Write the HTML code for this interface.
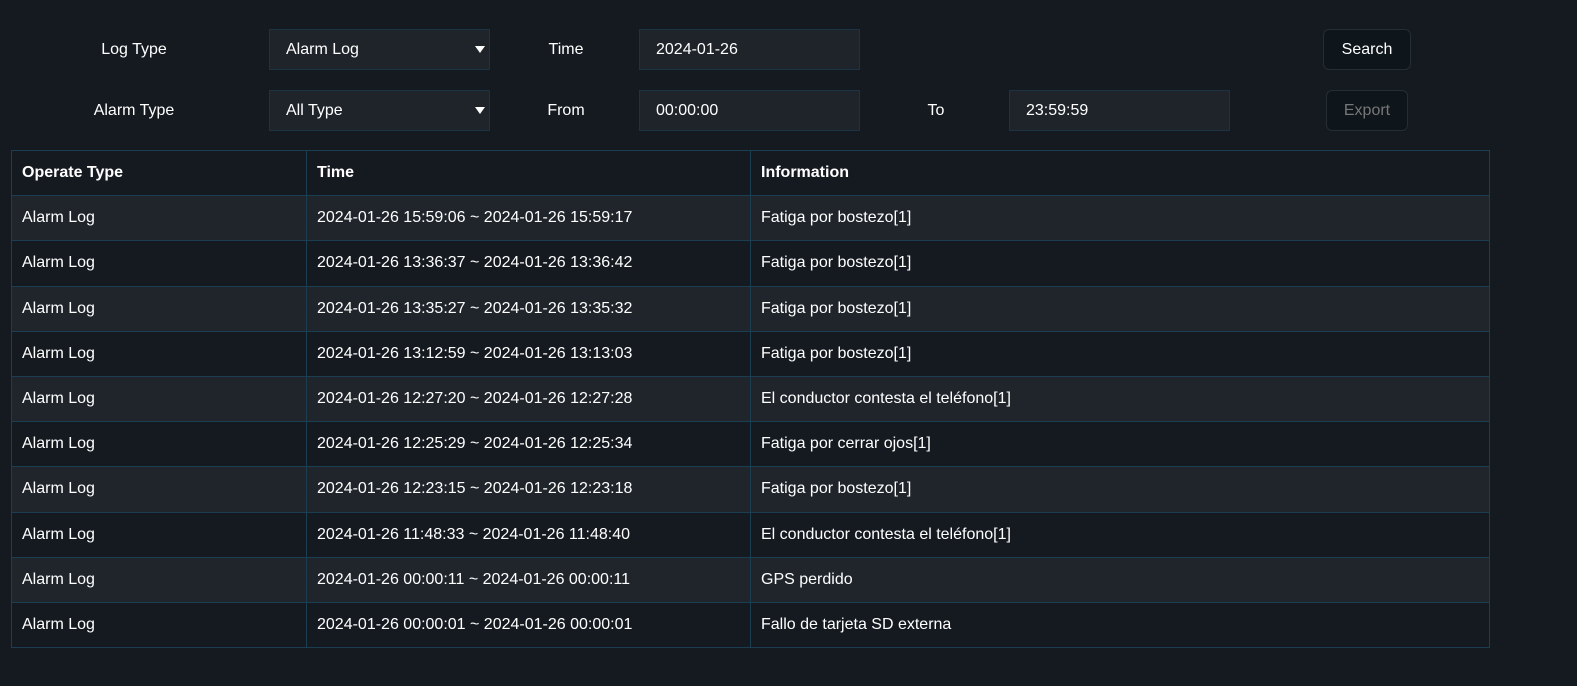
<!DOCTYPE html>
<html><head><meta charset="utf-8"><style>
*{box-sizing:border-box;margin:0;padding:0}
body{width:1577px;height:686px;background:#151a20;font-family:"Liberation Sans",Arial,sans-serif;font-size:16px;color:#fff;position:relative;overflow:hidden}
.lbl{position:absolute;text-align:center;line-height:41px;height:41px}
.inp{position:absolute;height:41px;width:221px;background:#1e242a;border:1px solid #1b3444;padding-left:16px;line-height:39px}
.arr{position:absolute;right:4px;top:16px;width:0;height:0;border-left:5px solid transparent;border-right:5px solid transparent;border-top:7px solid #fff}
.btn{position:absolute;height:41px;background:#0e151b;border:1px solid #252d35;border-radius:6px;text-align:center;line-height:39px}
table{position:absolute;left:11px;top:150px;width:1479px;border-collapse:collapse}
td,th{border:1px solid #1b3e52;height:45.2px;padding:0 10px;text-align:left;font-weight:normal}
th{font-weight:bold}
tr:nth-child(even) td{background:#1f252b}
tr:nth-child(odd) td{background:#151a20}
</style></head><body>
<div class="lbl" style="left:34px;width:200px;top:29px">Log Type</div>
<div class="lbl" style="left:34px;width:200px;top:90px">Alarm Type</div>
<div class="inp" style="left:269px;top:29px">Alarm Log<span class="arr"></span></div>
<div class="inp" style="left:269px;top:90px">All Type<span class="arr"></span></div>
<div class="lbl" style="left:516px;width:100px;top:29px">Time</div>
<div class="lbl" style="left:516px;width:100px;top:90px">From</div>
<div class="inp" style="left:639px;top:29px">2024-01-26</div>
<div class="inp" style="left:639px;top:90px">00:00:00</div>
<div class="lbl" style="left:886px;width:100px;top:90px">To</div>
<div class="inp" style="left:1009px;top:90px">23:59:59</div>
<div class="btn" style="left:1323px;top:29px;width:88px">Search</div>
<div class="btn" style="left:1326px;top:90px;width:82px;color:#777">Export</div>
<table>
<colgroup><col style="width:295px"><col style="width:444px"><col></colgroup>
<tr><th>Operate Type</th><th>Time</th><th>Information</th></tr>
<tr><td>Alarm Log</td><td>2024-01-26 15:59:06 ~ 2024-01-26 15:59:17</td><td>Fatiga por bostezo[1]</td></tr>
<tr><td>Alarm Log</td><td>2024-01-26 13:36:37 ~ 2024-01-26 13:36:42</td><td>Fatiga por bostezo[1]</td></tr>
<tr><td>Alarm Log</td><td>2024-01-26 13:35:27 ~ 2024-01-26 13:35:32</td><td>Fatiga por bostezo[1]</td></tr>
<tr><td>Alarm Log</td><td>2024-01-26 13:12:59 ~ 2024-01-26 13:13:03</td><td>Fatiga por bostezo[1]</td></tr>
<tr><td>Alarm Log</td><td>2024-01-26 12:27:20 ~ 2024-01-26 12:27:28</td><td>El conductor contesta el teléfono[1]</td></tr>
<tr><td>Alarm Log</td><td>2024-01-26 12:25:29 ~ 2024-01-26 12:25:34</td><td>Fatiga por cerrar ojos[1]</td></tr>
<tr><td>Alarm Log</td><td>2024-01-26 12:23:15 ~ 2024-01-26 12:23:18</td><td>Fatiga por bostezo[1]</td></tr>
<tr><td>Alarm Log</td><td>2024-01-26 11:48:33 ~ 2024-01-26 11:48:40</td><td>El conductor contesta el teléfono[1]</td></tr>
<tr><td>Alarm Log</td><td>2024-01-26 00:00:11 ~ 2024-01-26 00:00:11</td><td>GPS perdido</td></tr>
<tr><td>Alarm Log</td><td>2024-01-26 00:00:01 ~ 2024-01-26 00:00:01</td><td>Fallo de tarjeta SD externa</td></tr>
</table>
</body></html>
